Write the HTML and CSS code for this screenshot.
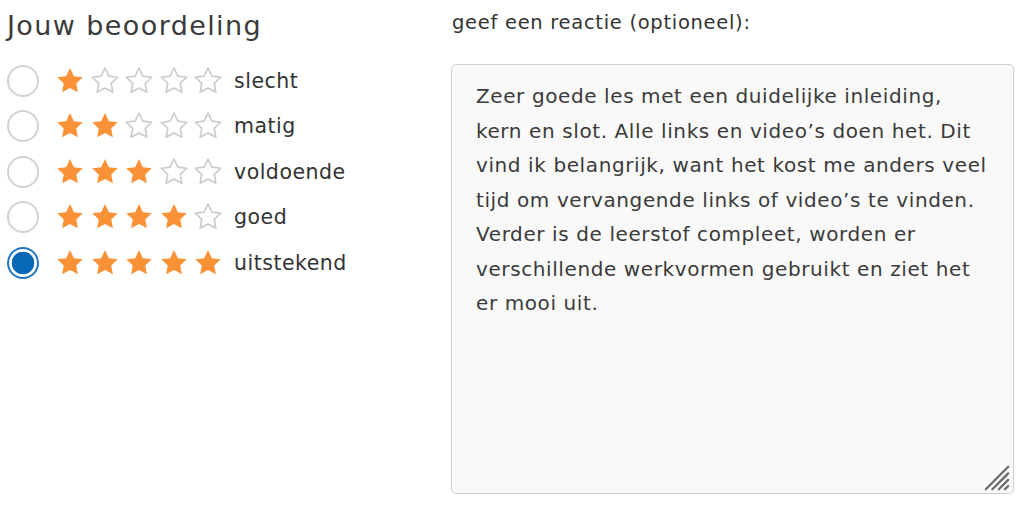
FILE: index.html
```html
<!DOCTYPE html>
<html lang="nl">
<head>
<meta charset="utf-8">
<link rel="stylesheet" href="styles.css">
</head>
<body>
<svg width="0" height="0" class="defs">
  <defs>
    <path id="star" d="M12 1.6l3.1 6.5 7.1.9-5.2 4.9 1.3 7.1L12 17.6 5.7 21l1.3-7.1L1.8 9l7.1-.9z"/>
  </defs>
</svg>
<div class="page">
  <div class="left">
    <h1 class="title">Jouw beoordeling</h1>
    <div class="rows">
      <label class="row"><span class="radio"></span><span class="stars"><svg class="star on" viewBox="0 0 24 24"><use href="#star"/></svg><svg class="star off" viewBox="0 0 24 24"><use href="#star"/></svg><svg class="star off" viewBox="0 0 24 24"><use href="#star"/></svg><svg class="star off" viewBox="0 0 24 24"><use href="#star"/></svg><svg class="star off" viewBox="0 0 24 24"><use href="#star"/></svg></span><span class="lbl">slecht</span></label>
      <label class="row"><span class="radio"></span><span class="stars"><svg class="star on" viewBox="0 0 24 24"><use href="#star"/></svg><svg class="star on" viewBox="0 0 24 24"><use href="#star"/></svg><svg class="star off" viewBox="0 0 24 24"><use href="#star"/></svg><svg class="star off" viewBox="0 0 24 24"><use href="#star"/></svg><svg class="star off" viewBox="0 0 24 24"><use href="#star"/></svg></span><span class="lbl">matig</span></label>
      <label class="row"><span class="radio"></span><span class="stars"><svg class="star on" viewBox="0 0 24 24"><use href="#star"/></svg><svg class="star on" viewBox="0 0 24 24"><use href="#star"/></svg><svg class="star on" viewBox="0 0 24 24"><use href="#star"/></svg><svg class="star off" viewBox="0 0 24 24"><use href="#star"/></svg><svg class="star off" viewBox="0 0 24 24"><use href="#star"/></svg></span><span class="lbl">voldoende</span></label>
      <label class="row"><span class="radio"></span><span class="stars"><svg class="star on" viewBox="0 0 24 24"><use href="#star"/></svg><svg class="star on" viewBox="0 0 24 24"><use href="#star"/></svg><svg class="star on" viewBox="0 0 24 24"><use href="#star"/></svg><svg class="star on" viewBox="0 0 24 24"><use href="#star"/></svg><svg class="star off" viewBox="0 0 24 24"><use href="#star"/></svg></span><span class="lbl">goed</span></label>
      <label class="row"><span class="radio checked"></span><span class="stars"><svg class="star on" viewBox="0 0 24 24"><use href="#star"/></svg><svg class="star on" viewBox="0 0 24 24"><use href="#star"/></svg><svg class="star on" viewBox="0 0 24 24"><use href="#star"/></svg><svg class="star on" viewBox="0 0 24 24"><use href="#star"/></svg><svg class="star on" viewBox="0 0 24 24"><use href="#star"/></svg></span><span class="lbl">uitstekend</span></label>
    </div>
  </div>
  <div class="right">
    <div class="caption">geef een reactie (optioneel):</div>
    <div class="box">
      <textarea class="text" readonly>Zeer goede les met een duidelijke inleiding,
kern en slot. Alle links en video’s doen het. Dit
vind ik belangrijk, want het kost me anders veel
tijd om vervangende links of video’s te vinden.
Verder is de leerstof compleet, worden er
verschillende werkvormen gebruikt en ziet het
er mooi uit.</textarea>
      <svg class="grip" viewBox="0 0 30 30"><g stroke="#6a6a6a" stroke-width="2.4" stroke-linecap="round"><line x1="27" y1="3" x2="3" y2="27"/><line x1="27" y1="10" x2="10" y2="27"/><line x1="27" y1="17" x2="17" y2="27"/><line x1="27" y1="23.5" x2="23.5" y2="27"/></g></svg>
    </div>
  </div>
</div>
</body>
</html>
```
FILE: styles.css
```css
html, body {
  margin: 0;
  padding: 0;
  background: #fff;
}
body {
  font-family: "DejaVu Sans", "Open Sans", sans-serif;
  color: #3a3a3a;
}
.defs {
  position: absolute;
  width: 0;
  height: 0;
}
.page {
  display: flex;
  width: 1024px;
  height: 506px;
}
.left {
  width: 451px;
  padding-left: 7px;
  box-sizing: border-box;
  flex: none;
}
.title {
  margin: 0;
  padding-top: 7px;
  height: 58px;
  box-sizing: border-box;
  font-size: 27px;
  font-weight: 400;
  letter-spacing: 1.4px;
  line-height: 38px;
  color: #3a3a3a;
}
.rows {
  display: flex;
  flex-direction: column;
}
.row {
  display: flex;
  align-items: center;
  height: 45.5px;
}
.radio {
  width: 32px;
  height: 32px;
  box-sizing: border-box;
  border: 2px solid #d2d2d2;
  border-radius: 50%;
  background: #fff;
  flex: none;
}
.radio.checked {
  border-color: #1f76c2;
  background: radial-gradient(circle, #0a68b8 0, #0a68b8 11px, #fff 11.6px);
}
.stars {
  display: flex;
  gap: 4.5px;
  margin-left: 16px;
}
.star {
  width: 30px;
  height: 30px;
  display: block;
}
.star.on {
  fill: #f99237;
}
.star.off {
  fill: #fff;
  stroke: #c9cbce;
  stroke-width: 1.3;
  stroke-linejoin: round;
}
.lbl {
  margin-left: 11px;
  font-size: 20.5px;
  letter-spacing: 0.5px;
  line-height: 30px;
  color: #333;
}
.right {
  width: 563px;
  box-sizing: border-box;
  flex: none;
}
.caption {
  padding-top: 8px;
  padding-left: 1px;
  height: 64px;
  box-sizing: border-box;
  font-size: 19.5px;
  letter-spacing: 0.7px;
  line-height: 30px;
  color: #333;
}
.box {
  position: relative;
  width: 563px;
  height: 430px;
}
.text {
  display: block;
  width: 100%;
  height: 100%;
  box-sizing: border-box;
  margin: 0;
  border: 1.5px solid #cfcfcf;
  border-radius: 5px;
  background: #f9f9f9;
  padding: 14px 16px 10px 24px;
  font-family: "DejaVu Sans", "Open Sans", sans-serif;
  font-size: 20px;
  letter-spacing: 0.6px;
  line-height: 34.5px;
  color: #3b3b3b;
  white-space: pre;
  overflow: hidden;
  resize: none;
  outline: none;
}
.grip {
  position: absolute;
  right: 3px;
  bottom: 2px;
  width: 28px;
  height: 28px;
}
```
